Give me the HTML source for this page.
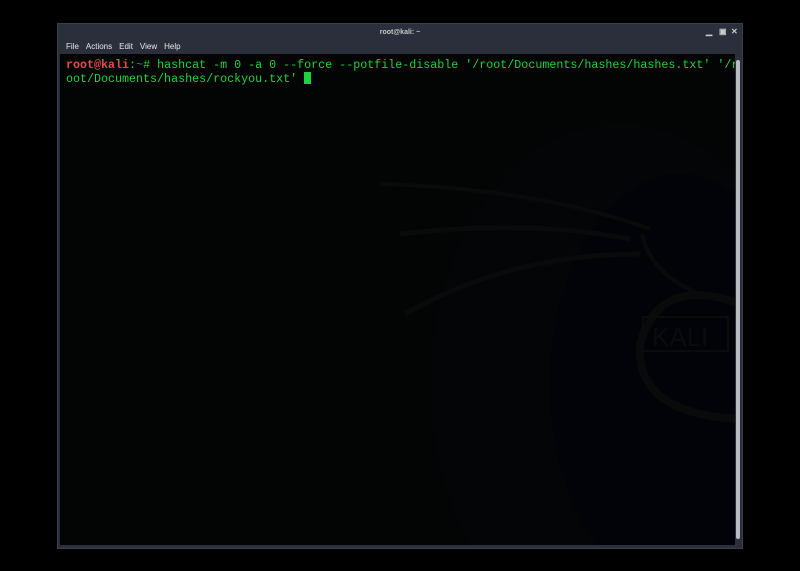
<!DOCTYPE html>
<html><head><meta charset="utf-8"><style>
html,body{margin:0;padding:0;background:#000;width:800px;height:571px;overflow:hidden;position:relative}
.win{position:absolute;left:57px;top:23px;width:686px;height:526px;background:#2a2f3b;border:1px solid #3a3f4b;box-sizing:border-box;overflow:hidden}
.title{position:absolute;left:0;top:0;width:100%;height:16px;text-align:center;font:bold 7px "Liberation Sans",sans-serif;color:#c8c8c8;line-height:17px}
.ctrl{position:absolute;top:3px;font:bold 8px "Liberation Sans",sans-serif;color:#ccc}
.menu{position:absolute;left:8px;top:17px;font:8px "Liberation Sans",sans-serif;color:#e8e8e8;line-height:11px}
.menu span{margin-right:7px}
.term{position:absolute;left:2px;top:30px;width:675px;height:491px;background:#030404;overflow:hidden}
.txt{position:absolute;left:6px;top:5px;width:676px;overflow:hidden;font:11.68px "Liberation Mono",monospace;line-height:13px;color:#1fd43a;white-space:pre}
.r{color:#e84a4a;font-weight:bold}.b{color:#3c6cf0}
.cur{display:inline-block;width:7px;height:12px;background:#1fd43a;vertical-align:-2px}
.sb{position:absolute;left:677px;top:30px;width:6px;height:491px;background:#2a2f3b}
.th{position:absolute;left:1px;top:6px;width:4px;height:479px;background:#b8bbbf;border-radius:2px}
</style></head><body>
<div class="win">
 <div class="title">root@kali: ~</div>
 <div class="ctrl" style="left:648px">▁</div>
 <div class="ctrl" style="left:661px">▣</div>
 <div class="ctrl" style="left:673px">✕</div>
 <div class="menu"><span>File</span><span>Actions</span><span>Edit</span><span>View</span><span>Help</span></div>
 <div class="term">
  <svg width="675" height="491" style="position:absolute;left:0;top:0;display:block">
   <ellipse cx="560" cy="330" rx="190" ry="260" fill="#040506"/>
   <ellipse cx="620" cy="330" rx="130" ry="210" fill="#020308"/>
   <path d="M320 130 Q480 135 590 175" stroke="#0a0a0b" stroke-width="4" fill="none"/>
   <path d="M340 180 Q470 165 570 185" stroke="#0a0a0b" stroke-width="5" fill="none"/>
   <path d="M345 260 Q450 200 580 200" stroke="#0a0a0b" stroke-width="5" fill="none"/>
   <path d="M582 180 Q590 220 640 240" stroke="#0a0a0b" stroke-width="4" fill="none"/>
   <path d="M680 250 Q600 220 580 290 Q575 360 680 365" stroke="#0a0a0b" stroke-width="8" fill="none"/>
   <rect x="583" y="263" width="85" height="34" stroke="#0b0b0c" stroke-width="2" fill="none"/>
   <text x="592" y="292" font-family="Liberation Sans" font-size="26" fill="#0b0b0c">KALI</text>
  </svg>
  <div class="txt"><span class="r">root@kali</span>:<span class="b">~</span># hashcat -m 0 -a 0 --force --potfile-disable '/root/Documents/hashes/hashes.txt' '/r
oot/Documents/hashes/rockyou.txt' <span class="cur"></span></div>
 </div>
 <div class="sb"><div class="th"></div></div>
</div>
</body></html>
